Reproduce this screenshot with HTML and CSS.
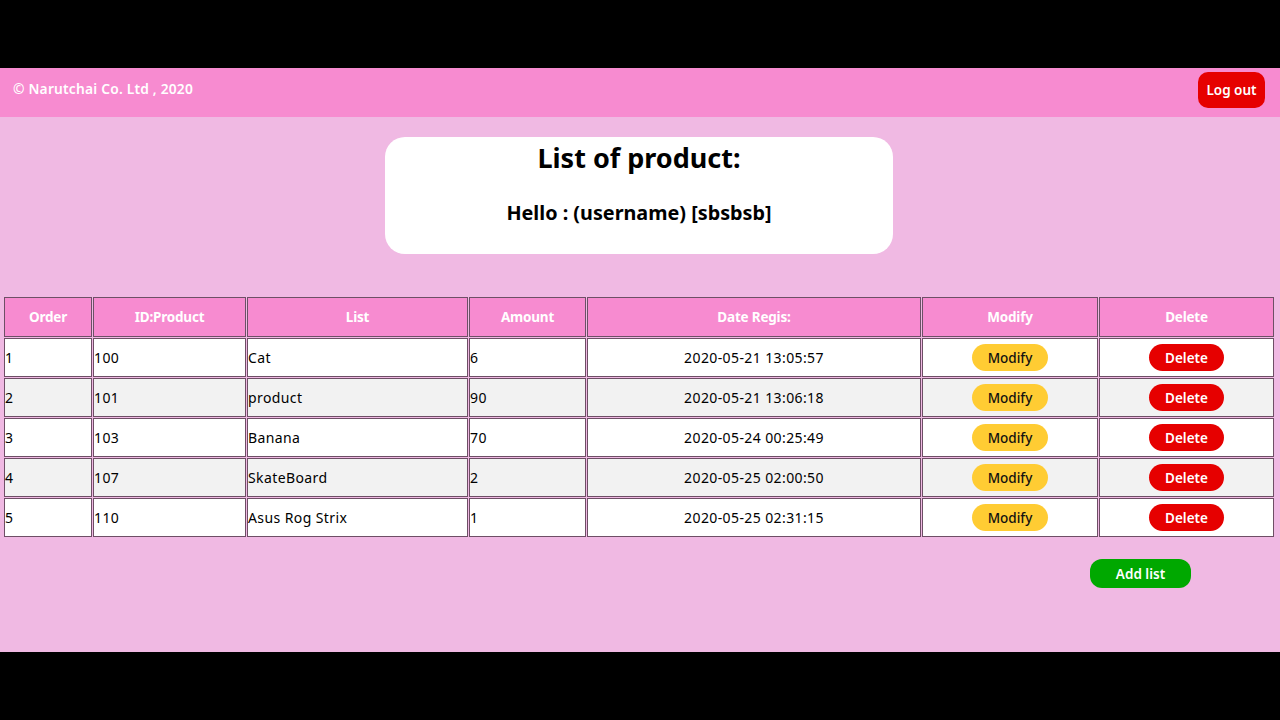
FILE: index.html
```html
<!DOCTYPE html>
<html lang="en">
<head>
<meta charset="utf-8">
<title>List of product</title>
<link rel="stylesheet" href="styles.css">
</head>
<body>
<div class="letterbox"></div>
<div class="page">
  <header class="topbar">
    <span class="copy">© Narutchai Co. Ltd , 2020</span>
    <button class="btn btn-logout">Log out</button>
  </header>
  <section class="card">
    <h1 class="title">List of product:</h1>
    <h2 class="hello">Hello : (username) [sbsbsb]</h2>
  </section>
  <table class="products">
    <colgroup>
      <col class="c-order"><col class="c-id"><col class="c-list"><col class="c-amount"><col class="c-date"><col class="c-mod"><col class="c-del">
    </colgroup>
    <thead>
      <tr><th>Order</th><th>ID:Product</th><th>List</th><th>Amount</th><th>Date Regis:</th><th>Modify</th><th>Delete</th></tr>
    </thead>
    <tbody>
      <tr><td>1</td><td>100</td><td>Cat</td><td>6</td><td class="center">2020-05-21 13:05:57</td><td class="center"><button class="btn btn-modify">Modify</button></td><td class="center"><button class="btn btn-delete">Delete</button></td></tr>
      <tr><td>2</td><td>101</td><td>product</td><td>90</td><td class="center">2020-05-21 13:06:18</td><td class="center"><button class="btn btn-modify">Modify</button></td><td class="center"><button class="btn btn-delete">Delete</button></td></tr>
      <tr><td>3</td><td>103</td><td>Banana</td><td>70</td><td class="center">2020-05-24 00:25:49</td><td class="center"><button class="btn btn-modify">Modify</button></td><td class="center"><button class="btn btn-delete">Delete</button></td></tr>
      <tr><td>4</td><td>107</td><td>SkateBoard</td><td>2</td><td class="center">2020-05-25 02:00:50</td><td class="center"><button class="btn btn-modify">Modify</button></td><td class="center"><button class="btn btn-delete">Delete</button></td></tr>
      <tr><td>5</td><td>110</td><td>Asus Rog Strix</td><td>1</td><td class="center">2020-05-25 02:31:15</td><td class="center"><button class="btn btn-modify">Modify</button></td><td class="center"><button class="btn btn-delete">Delete</button></td></tr>
    </tbody>
  </table>
  <div class="actions">
    <button class="btn btn-add">Add list</button>
  </div>
</div>
<div class="letterbox"></div>
</body>
</html>
```

FILE: styles.css
```css
* { box-sizing: border-box; }
html, body { margin: 0; padding: 0; }
body {
  background: #000;
  font-family: "Noto Sans", "Open Sans", Arial, sans-serif;
  color: #000;
  width: 1280px;
  height: 720px;
  overflow: hidden;
}
.letterbox { height: 68px; background: #000; }
.page {
  height: 584px;
  background: #f0b9e3;
  display: flex;
  flex-direction: column;
}
.topbar {
  height: 49px;
  flex: none;
  background: #f78bd0;
  display: flex;
  align-items: flex-start;
  justify-content: space-between;
  padding: 4px 15px 0 13px;
}
.copy {
  color: #fff;
  font-size: 13.8px;
  line-height: 34px;
  font-weight: 600;
  letter-spacing: 0.2px;
}
.btn {
  font-family: inherit;
  border: none;
  font-size: 13px;
  font-weight: 600;
  cursor: pointer;
  padding: 0;
}
.btn-logout {
  background: #e60000;
  color: #fff;
  width: 67px;
  height: 36px;
  border-radius: 10px;
  font-size: 13.5px;
}
.card {
  width: 508px;
  flex: none;
  margin: 20px 0 0 385px;
  background: #fff;
  border-radius: 20px;
  padding: 5px 0 29px;
  text-align: center;
}
.title {
  margin: 0;
  font-size: 27px;
  line-height: 32px;
  font-weight: 700;
}
.hello {
  margin: 27px 0 0;
  font-size: 19.8px;
  line-height: 24px;
  font-weight: 700;
}
.products {
  margin: 42px 0 0 3px;
  width: 1272px;
  border-collapse: separate;
  border-spacing: 1px;
  table-layout: fixed;
  font-size: 14px;
}
.c-order { width: 88px; }
.c-id { width: 153px; }
.c-list { width: 221px; }
.c-amount { width: 117px; }
.c-date { width: 334px; }
.c-mod { width: 176px; }
.c-del { width: 175px; }
.products th, .products td {
  border: 1px solid #6e4f66;
  height: 39px;
  padding: 0;
  vertical-align: middle;
}
.products th {
  height: 40px;
  background: #f78bd0;
  color: #fff;
  font-weight: 700;
  text-align: center;
  font-size: 13.5px;
  letter-spacing: -0.2px;
}
.products td { background: #fff; text-align: left; letter-spacing: 0.4px; }
.products tbody tr:nth-child(even) td { background: #f2f2f2; }
.products td.center { text-align: center; }
.btn-modify {
  background: #ffcc33;
  color: #111;
  width: 76px;
  height: 27px;
  border-radius: 14px;
  font-weight: 500;
  font-size: 13.5px;
  letter-spacing: 0;
}
.btn-delete {
  background: #e60000;
  color: #fff;
  width: 75px;
  height: 27px;
  border-radius: 14px;
  font-size: 13.5px;
  letter-spacing: 0;
}
.actions {
  display: flex;
  justify-content: flex-end;
  padding-right: 89px;
  margin-top: 21px;
}
.btn-add {
  background: #00a800;
  color: #fff;
  width: 101px;
  height: 29px;
  border-radius: 12px;
  font-size: 13.5px;
}
```
